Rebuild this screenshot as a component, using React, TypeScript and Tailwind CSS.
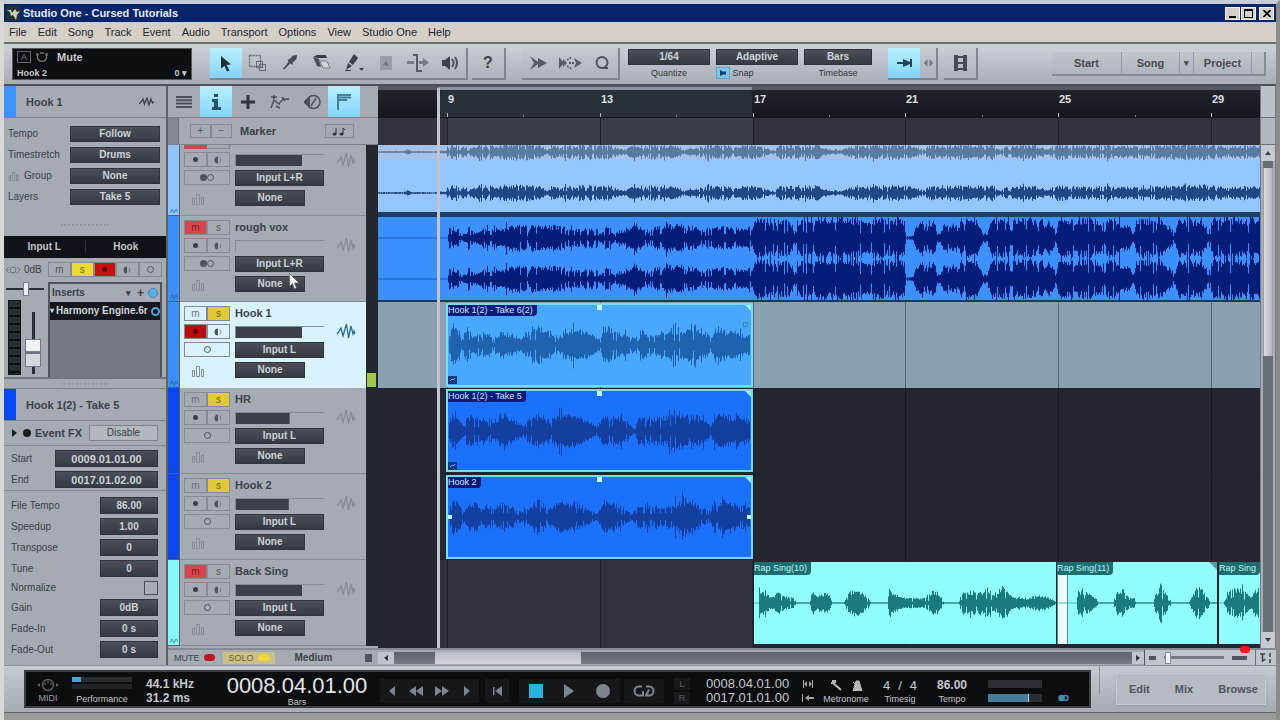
import { useState, type ReactNode } from 'react';
import { clsx } from 'clsx';

type Point = [number, number];

/* ---------- waveform helpers ---------- */

function noise(n: number) {
  const v = Math.sin(n * 127.1 + 311.7) * 43758.5453;
  return v - Math.floor(v);
}

function level(env: Point[], x: number) {
  if (x <= env[0][0]) return env[0][1];
  for (let i = 1; i < env.length; i++) {
    const [x1, a1] = env[i];
    const [x0, a0] = env[i - 1];
    if (x <= x1) return a0 + ((a1 - a0) * (x - x0)) / Math.max(1, x1 - x0);
  }
  return env[env.length - 1][1];
}

// one column per pixel, so the peaks stay hard-edged
function wavePath(from: number, to: number, mid: number, env: Point[], seed: number, rough = 0.5) {
  const top: string[] = [];
  const bottom: string[] = [];
  for (let x = from; x < to; x++) {
    const base = level(env, x + 0.5);
    const pick = noise(x * 3 + seed);
    const accent = base < 2 ? 1 : pick > 0.93 ? 1.4 : pick < 0.1 ? 0.4 : 1.05;
    const shared = 1 - rough * noise(x + seed);
    const up = Math.max(0.5, base * accent * shared * (0.9 + 0.2 * noise(x + seed + 400)));
    const down = Math.max(0.5, base * accent * shared * (0.9 + 0.2 * noise(x + seed + 999)));
    top.push(`${x},${(mid - up).toFixed(1)}`, `${x + 1},${(mid - up).toFixed(1)}`);
    bottom.unshift(`${x + 1},${(mid + down).toFixed(1)}`, `${x},${(mid + down).toFixed(1)}`);
  }
  return `M${top.join('L')}L${bottom.join('L')}Z`;
}

const guitarEnv: Point[] = [
  [0, 1], [26, 1], [30, 3], [34, 1], [60, 1], [68, 2], [70, 7], [84, 7], [90, 3], [97, 6], [150, 8], [162, 7], [170, 2], [175, 7],
  [230, 8], [243, 3], [248, 2], [253, 7], [275, 7], [286, 6], [292, 7], [312, 3], [328, 7], [374, 7], [385, 5], [396, 2], [402, 7],
  [440, 7], [450, 3], [462, 2], [478, 7], [530, 8], [545, 3], [553, 7], [578, 7], [590, 7], [615, 7], [622, 2], [630, 7], [660, 7],
  [668, 3], [678, 7], [705, 6], [714, 7], [770, 6], [782, 7], [825, 8], [850, 5], [858, 7], [882, 6],
];

const voxEnv: Point[] = [
  [70, 1], [72, 14], [82, 7], [88, 4], [91, 12], [96, 5], [108, 9], [118, 9], [130, 12], [148, 13], [150, 4], [153, 13], [180, 12],
  [183, 14], [190, 10], [220, 9], [223, 3], [228, 13], [236, 5], [250, 9], [258, 13], [270, 8], [290, 14], [310, 13], [325, 8],
  [345, 12], [368, 12], [374, 8], [377, 19], [395, 20], [414, 17], [416, 5], [420, 19], [450, 21], [480, 20], [490, 17], [496, 20],
  [526, 21], [528, 2], [535, 2], [538, 12], [545, 20], [556, 16], [562, 3], [567, 17], [580, 12], [583, 19], [600, 18], [606, 3],
  [611, 12], [616, 20], [645, 21], [672, 16], [676, 12], [684, 19], [715, 20], [735, 19], [752, 12], [756, 3], [758, 20], [780, 21],
  [797, 6], [801, 19], [826, 17], [830, 4], [835, 20], [882, 20],
];

const hookEnvs: Point[][] = [
  [[0, 3], [4, 20], [10, 15], [14, 4], [19, 19], [24, 9], [40, 13], [46, 8], [56, 14], [72, 7], [82, 14], [88, 19], [105, 11], [110, 8], [125, 16], [140, 13], [152, 6], [156, 19], [178, 12], [186, 8], [192, 16], [205, 9], [225, 17], [235, 12], [246, 20], [258, 14], [263, 5], [267, 17], [284, 14], [300, 11], [305, 6]],
  [[0, 3], [4, 17], [12, 12], [16, 5], [20, 15], [35, 14], [45, 11], [56, 18], [75, 5], [84, 15], [95, 16], [104, 10], [110, 17], [130, 15], [150, 5], [156, 17], [175, 15], [184, 4], [192, 15], [205, 12], [226, 17], [240, 18], [258, 12], [263, 4], [267, 17], [284, 16], [300, 12], [305, 5]],
  [[0, 3], [4, 19], [12, 13], [16, 5], [20, 15], [30, 13], [45, 10], [56, 14], [75, 5], [86, 15], [104, 8], [110, 15], [130, 13], [150, 4], [156, 18], [170, 12], [184, 4], [192, 13], [215, 9], [236, 19], [250, 12], [263, 5], [267, 18], [284, 15], [300, 11], [305, 6]],
];

const rapWaves: Point[][] = [
  [[5, 15], [9, 12], [18, 5], [24, 12], [28, 7], [41, 5], [42, 0], [56, 0], [58, 12], [64, 8], [76, 10], [78, 0], [90, 0], [94, 11], [104, 13], [115, 4], [117, 0], [134, 0], [135, 14], [140, 9], [150, 5], [170, 5], [180, 12], [188, 6], [190, 0], [205, 0], [207, 10], [236, 12], [242, 7], [248, 18], [258, 6], [275, 5], [285, 8], [296, 5], [302, 1]],
  [[20, 0], [21, 12], [32, 10], [40, 4], [41, 0], [57, 0], [58, 11], [66, 13], [78, 4], [79, 0], [97, 0], [98, 9], [104, 14], [113, 6], [114, 0], [132, 0], [134, 5], [142, 17], [152, 4], [153, 0], [160, 0]],
  [[5, 0], [6, 10], [14, 15], [24, 13], [33, 6], [35, 12], [40, 12]],
];

/* ---------- timeline geometry ---------- */

const barX = (bar: number) => Math.round(69 + (bar - 9) * 38.2);
const bars = [9, 13, 17, 21, 25, 29];

/* ---------- small controls ---------- */

function Picker({ label, value, className }: { label: string; value: string; className?: string }) {
  return (
    <select
      aria-label={label}
      defaultValue={value}
      className={clsx(
        'h-4 appearance-none border border-[#30343b] bg-linear-to-b from-[#4a4f58] to-[#363a42] text-[10px] leading-3 font-bold text-[#cdd2d9] outline-none [text-align-last:center]',
        className,
      )}
    >
      <option>{value}</option>
    </select>
  );
}

function Field({ id, label, value, className }: { id: string; label: string; value: string; className?: string }) {
  return (
    <div className="flex h-[17px] items-center justify-between">
      <label htmlFor={id} className="text-[10px] leading-3 text-[#3b3f48]">
        {label}
      </label>
      <input
        id={id}
        defaultValue={value}
        className={clsx(
          'h-[17px] border border-[#30343b] bg-linear-to-b from-[#4a4f58] to-[#363a42] text-center font-bold text-[#cdd2d9] outline-none',
          className,
        )}
      />
    </div>
  );
}

function Cell({ label, className, children }: { label: string; className?: string; children?: ReactNode }) {
  return (
    <button
      aria-label={label}
      className={clsx(
        'flex flex-1 items-center justify-center border border-[#868b93] text-[10px] leading-3',
        className ?? 'text-[#50545d]',
      )}
    >
      {children}
    </button>
  );
}

function Tool({ label, active, className, children }: { label: string; active?: boolean; className?: string; children: ReactNode }) {
  return (
    <button
      aria-label={label}
      className={clsx(
        'flex w-8 items-center justify-center self-stretch text-[#3c4048]',
        active && 'bg-linear-to-b from-[#b9f0ff] to-[#83d3f8]',
        className,
      )}
    >
      {children}
    </button>
  );
}

function ToolGroup({ className, children }: { className?: string; children: ReactNode }) {
  return (
    <div className={clsx('flex h-8 border-r-2 border-b-2 border-[#80858d] bg-linear-to-b from-[#c6cad1] to-[#aeb3bb]', className)}>
      {children}
    </div>
  );
}

const RecDot = () => <span className="size-[5px] rounded-full bg-current" />;

function Speaker() {
  return (
    <svg width="9" height="8" viewBox="0 0 9 8">
      <path d="M4 0.5v7A3.5 3.5 0 0 1 4 .5z" fill="currentColor" />
      <path d="M6 1.5q2 2.5 0 5" fill="none" stroke="currentColor" opacity=".6" />
    </svg>
  );
}

function WaveGlyph({ className }: { className?: string }) {
  return (
    <svg width="20" height="18" viewBox="0 0 20 18" className={className} fill="none" stroke="currentColor" strokeWidth="1.3">
      <path d="M1 12l1.500-2 2.500-4 2 8 3.500-12 2 14 2.500-12 2 8 1-3 1 3" />
    </svg>
  );
}

function Bars({ className }: { className?: string }) {
  return (
    <svg width="13" height="11" viewBox="0 0 13 11" className={className} fill="none" stroke="currentColor">
      <path d="M.5 4.500h2v6h-2zM4.500 .5h3v10h-3zM9.500 3.500h2v7h-2z" />
    </svg>
  );
}

/* ---------- window chrome ---------- */

function TitleBar() {
  return (
    <header className="flex h-[19px] items-center border-b border-[#c4cbe0] bg-[#08246b] px-0.5">
      <svg width="15" height="15" viewBox="0 0 15 15">
        <rect width="15" height="15" fill="#23303a" />
        <path d="M1 4h4l1 3 3-4 2 3 3-1-3 4-1 5-3-5-2 1-1-4z" fill="#c9d0b8" />
      </svg>
      <h1 className="ml-0.5 text-[11px] leading-4 font-bold text-[#e6ebf7]">Studio One - Cursed Tutorials</h1>
      <div className="ml-auto flex gap-px text-black">
        <button aria-label="Minimize" className="flex h-[13px] w-[15px] items-end justify-center border border-[#f2f0ea] bg-[#d4d0c8] pb-px">
          <span className="h-[2px] w-[7px] bg-current" />
        </button>
        <button aria-label="Maximize" className="flex h-[13px] w-[15px] items-center justify-center border border-[#f2f0ea] bg-[#d4d0c8]">
          <span className="h-[9px] w-[9px] border border-t-2 border-current" />
        </button>
        <button aria-label="Close" className="ml-0.5 flex h-[13px] w-[15px] items-center justify-center border border-[#f2f0ea] bg-[#d4d0c8]">
          <svg width="8" height="7" viewBox="0 0 8 7" stroke="currentColor" strokeWidth="1.700">
            <path d="M.5 0l7 7M7.500 0l-7 7" />
          </svg>
        </button>
      </div>
    </header>
  );
}

const menus = ['File', 'Edit', 'Song', 'Track', 'Event', 'Audio', 'Transport', 'Options', 'View', 'Studio One', 'Help'];

function MenuBar() {
  return (
    <nav className="flex h-[21px] items-center gap-[11px] border-b-2 border-[#6e706f] bg-[#d4d0c8] px-[5px] pb-px text-[11px] leading-4 text-[#26272b]">
      {menus.map((m) => (
        <button key={m}>{m}</button>
      ))}
    </nav>
  );
}

function LabeledPicker({ label, value, className, snap }: { label: string; value: string; className: string; snap?: boolean }) {
  return (
    <div className={clsx('flex flex-col', className)}>
      <Picker label={label} value={value} className="w-full" />
      <div className={clsx('relative mt-0.5 text-center text-[9px] leading-3 text-[#31353d]', snap && 'pr-7')}>
        {snap && (
          <button aria-label="Toggle snap" className="absolute left-0 flex h-3 w-3.5 items-center justify-center border border-[#5fa3cf] bg-[#7cc4ee]">
            <svg width="7" height="6" viewBox="0 0 7 6" fill="#173f63">
              <path d="M0 0l3 1.500h3v3H3L0 6z" />
            </svg>
          </button>
        )}
        {label}
      </div>
    </div>
  );
}

function Toolbar() {
  return (
    <div className="flex h-[42px] items-center border-b-2 border-[#4c5058] bg-linear-to-b from-[#ced2d9] to-[#a8adb6] pr-2.5 pl-2">
      <div className="flex h-8 w-[180px] flex-col justify-between border border-[#55585d] bg-[#0d0f12] px-1 text-[#c6c9cd]">
        <div className="flex items-center gap-1 pt-0.5">
          <span className="flex h-3 w-3.5 items-center justify-center border border-[#60636a] text-[9px] leading-3 text-[#7d8188]">A</span>
          <svg width="14" height="12" viewBox="0 0 14 12" fill="none" stroke="#6f737a" strokeWidth="1.500">
            <path d="M10.500 3A4.500 4.500 0 1 1 3.500 3M2 2v3M12 2v3M6 1v2M8 1v2" />
          </svg>
          <span className="ml-1 text-[11px] leading-3 font-bold">Mute</span>
        </div>
        <div className="flex justify-between text-[9px] leading-3 font-bold">
          <span>Hook 2</span>
          <span>0 ▾</span>
        </div>
      </div>

      <ToolGroup className="ml-[18px]">
        <Tool label="Arrow tool" active>
          <svg width="12" height="17" viewBox="0 0 12 17" fill="#23303a">
            <path d="M1 1l10 8.500-4.500.5 3 5.500-2.500 1-2.500-5.500L1 13.500z" />
          </svg>
        </Tool>
        <Tool label="Range tool">
          <svg width="20" height="18" viewBox="0 0 20 18" fill="none" stroke="#666b74">
            <rect x="1.500" y="1.500" width="11" height="11" strokeDasharray="2 1" strokeWidth="1.300" />
            <rect x="8.500" y="7.500" width="6" height="6" />
            <rect x="11.500" y="10.500" width="6" height="6" />
          </svg>
        </Tool>
        <Tool label="Split tool">
          <svg width="18" height="18" viewBox="0 0 18 18" fill="#484d56">
            <path d="M16 1l-4 .5-4 4-1.500-.5 1 3L2 15l1.500.5L9 9.500l3 1.500-.5-2 4-4z" />
          </svg>
        </Tool>
        <Tool label="Eraser tool">
          <svg width="20" height="18" viewBox="0 0 20 18">
            <path d="M1 3l4-2h9l1 3H6z" fill="#3a3e46" />
            <path d="M1 3l4 9 4 1-2-8z" fill="#4b5059" />
            <path d="M8 7h7l3 7h-7z" fill="#d3d6db" stroke="#777c85" />
          </svg>
        </Tool>
        <Tool label="Paint tool">
          <svg width="22" height="20" viewBox="0 0 22 20" fill="#3c4048">
            <path d="M11 1l4 4-5 7-4-3zM5 10l4 3-6 4z" />
            <path d="M2 17h6v1H2z" />
            <path d="M16 15h5l-2.500 3z" />
          </svg>
        </Tool>
        <Tool label="Mute tool">
          <svg width="14" height="16" viewBox="0 0 14 16">
            <rect x="1" y="1" width="12" height="14" fill="#989da6" />
            <path d="M4 10l3-4 3 5z" fill="#6f747d" />
          </svg>
        </Tool>
        <Tool label="Bend tool">
          <svg width="24" height="20" viewBox="0 0 24 20" fill="#777c85">
            <path d="M1 8h7v3H1zM23 9.500L17 5v3h-4v3h4v3z" />
            <path d="M7 2h4v16h5" fill="none" stroke="#555a63" strokeWidth="2" />
          </svg>
        </Tool>
        <Tool label="Listen tool">
          <svg width="18" height="16" viewBox="0 0 18 16" fill="#3c4048">
            <path d="M1 5h3l5-4v14l-5-4H1z" />
            <path d="M11 4q3 4 0 8M14 2q4 6 0 12" fill="none" stroke="#4a4f58" strokeWidth="2" />
          </svg>
        </Tool>
      </ToolGroup>

      <ToolGroup className="ml-1">
        <Tool label="Help">
          <span className="text-[16px] leading-4 font-bold">?</span>
        </Tool>
      </ToolGroup>

      <ToolGroup className="ml-4">
        <Tool label="Autoscroll">
          <svg width="19" height="16" viewBox="0 0 19 16" fill="#555a63">
            <path d="M1 1l8 6V3l9 5-9 5V9l-8 6 4-7z" />
          </svg>
        </Tool>
        <Tool label="Nudge">
          <svg width="25" height="16" viewBox="0 0 25 16" fill="#555a63">
            <path d="M1 2l4 5V4l4 4-4 4V9l-4 5zM16 3l8 5-8 5 2-5z" />
            <path d="M9 5l5-3M9 11l5 3" stroke="#555a63" strokeWidth="1.500" strokeDasharray="2 1" />
            <path d="M11 8h6" stroke="#555a63" strokeWidth="2" strokeDasharray="2 1" />
          </svg>
        </Tool>
        <Tool label="Quantize events">
          <svg width="16" height="16" viewBox="0 0 16 16" fill="none" stroke="#4f545d" strokeWidth="2">
            <circle cx="8" cy="7.500" r="5.500" />
            <path d="M9 13h5" />
          </svg>
        </Tool>
      </ToolGroup>

      <div className="ml-2 flex gap-1.5">
        <LabeledPicker label="Quantize" value="1/64" className="w-[82px]" />
        <LabeledPicker label="Snap" value="Adaptive" className="w-[82px]" snap />
        <LabeledPicker label="Timebase" value="Bars" className="w-[68px]" />
      </div>

      <ToolGroup className="ml-4">
        <Tool label="Snap to grid" active>
          <svg width="17" height="10" viewBox="0 0 17 10" fill="#20455c">
            <path d="M1 5h9" stroke="#20455c" strokeWidth="2" />
            <path d="M7 1l7 3V1h2v8h-2V6L7 9z" />
          </svg>
        </Tool>
        <button aria-label="Snap mode" className="flex w-4 items-center justify-center">
          <svg width="9" height="10" viewBox="0 0 9 10" fill="#70757e">
            <path d="M3.500 1v8L0 5zM5.500 1v8L9 5z" />
          </svg>
        </button>
      </ToolGroup>
      <ToolGroup className="ml-1.5">
        <Tool label="Video">
          <svg width="15" height="18" viewBox="0 0 15 18" fill="#454a53">
            <path d="M1 1h4v16H1zM10 1h4v16h-4zM4 2h7v2H4zM4 8h7v2H4zM4 14h7v2H4z" />
          </svg>
        </Tool>
      </ToolGroup>

      <div className="ml-auto flex h-6 border-r-2 border-b-2 border-[#868b93] bg-linear-to-b from-[#c0c5cc] to-[#b0b5bd] text-[11px] leading-4 font-bold text-[#474b54]">
        <button className="w-[70px] border-r border-[#989da5]">Start</button>
        <button className="w-[58px] border-r border-[#989da5]">Song</button>
        <button aria-label="Open songs" className="flex w-3.5 items-center justify-center border-r border-[#989da5] text-[9px]">▾</button>
        <button className="w-[58px] border-r border-[#989da5]">Project</button>
        <span className="w-3" />
      </div>
    </div>
  );
}

/* ---------- inspector ---------- */

function Grip() {
  return <div className="mx-auto w-12 border-t-2 border-dotted border-[#959aa2]" />;
}

function InspectorHead({ title, stripe, children }: { title: string; stripe: string; children?: ReactNode }) {
  return (
    <div className="flex h-8 items-center border-b border-[#7b8089]">
      <span className={clsx('w-3 self-stretch', stripe)} />
      <h2 className="ml-2.5 flex-1 text-[11px] leading-4 font-bold text-[#3d414a]">{title}</h2>
      {children}
    </div>
  );
}

const trackParams = [
  { label: 'Tempo', value: 'Follow' },
  { label: 'Timestretch', value: 'Drums' },
  { label: 'Group', value: 'None' },
  { label: 'Layers', value: 'Take 5' },
];

function Inspector() {
  const [normalize, setNormalize] = useState(false);

  return (
    <aside className="flex w-[164px] shrink-0 flex-col border-r-2 border-[#5d616a] bg-[#a5abb4]">
      <InspectorHead title="Hook 1" stripe="bg-[#3d93ff]">
        <svg width="15" height="9" viewBox="0 0 15 9" className="mr-3" fill="none" stroke="#3d414a" strokeWidth="1.300">
          <path d="M0 7l2-2 2-3 1.500 5L8 1l2 7 2-6 1.500 4L15 5" />
        </svg>
      </InspectorHead>

      <div className="flex flex-col gap-[5px] py-2 pr-1.5 pl-1">
        {trackParams.map((p) => (
          <div key={p.label} className="flex items-center justify-between">
            <span className="flex items-center gap-1 text-[10px] leading-3 text-[#3b3f48]">
              {p.label === 'Group' && <Bars className="h-[9px] w-3 text-[#7b8089]" />}
              {p.label}
            </span>
            <Picker label={p.label} value={p.value} className="w-[90px]" />
          </div>
        ))}
      </div>

      <div className="flex h-[23px] items-center">
        <Grip />
      </div>

      <div className="flex h-[22px] items-center bg-[#101317] text-center text-[10px] leading-3 font-bold text-[#c3c7cc]">
        <button className="flex-1">Input L</button>
        <button className="flex-1 border-l border-[#2c3036]">Hook</button>
      </div>

      <div className="flex h-[121px] border-b-2 border-[#71767f]">
        <div className="flex w-11 flex-col pt-1.5 pl-0.5">
          <div className="flex items-center gap-1 text-[10px] leading-3 text-[#3b3f48]">
            <svg width="14" height="8" viewBox="0 0 14 8" fill="none" stroke="#6b7079">
              <circle cx="7" cy="4" r="3" />
              <path d="M3 1L0 4l3 3M11 1l3 3-3 3" />
            </svg>
            0dB
          </div>
          <input
            type="range"
            aria-label="Pan"
            defaultValue={52}
            className="mt-1.5 h-3.5 w-[38px] appearance-none bg-[linear-gradient(#2b2e34,#2b2e34)] bg-[length:100%_2px] bg-center bg-no-repeat [&::-webkit-slider-thumb]:h-3.5 [&::-webkit-slider-thumb]:w-1.5 [&::-webkit-slider-thumb]:appearance-none [&::-webkit-slider-thumb]:border [&::-webkit-slider-thumb]:border-[#7b8089] [&::-webkit-slider-thumb]:bg-[#eceef1]"
          />
          <div className="mt-1 flex gap-1">
            <div className="ml-0.5 h-[75px] w-[13px] border border-[#14171b] bg-[repeating-linear-gradient(#23302f_0px,#23302f_6px,#0b0d0f_6px,#0b0d0f_8px)]" />
            <input
              type="range"
              aria-label="Volume"
              defaultValue={22}
              className="mt-3 h-[62px] w-4 appearance-none bg-[linear-gradient(#2b2e34,#2b2e34)] bg-[length:3px_100%] bg-center bg-no-repeat [direction:rtl] [writing-mode:vertical-lr] [&::-webkit-slider-thumb]:h-7 [&::-webkit-slider-thumb]:w-4 [&::-webkit-slider-thumb]:appearance-none [&::-webkit-slider-thumb]:border [&::-webkit-slider-thumb]:border-[#73777f] [&::-webkit-slider-thumb]:bg-[linear-gradient(#f1f2f4_40%,#6c7078_45%,#6c7078_52%,#d5d7db_55%)]"
            />
          </div>
        </div>
        <div className="flex flex-1 flex-col pt-1 pr-1">
          <div className="flex h-[15px]">
            <Cell label="Mute">m</Cell>
            <Cell label="Solo" className="bg-[#eadb35] text-[#7c6d10]">s</Cell>
            <Cell label="Record" className="bg-[#c8100f] text-[#5e0505]"><RecDot /></Cell>
            <Cell label="Monitor"><Speaker /></Cell>
            <Cell label="Channel mode"><span className="size-[7px] rounded-full border border-current" /></Cell>
          </div>
          <div className="mt-[5px] flex flex-1 flex-col border-2 border-b-0 border-[#50545c] bg-[#747982]">
            <div className="flex h-[18px] items-center bg-[#a5abb4] px-0.5 text-[10px] leading-3 font-bold text-[#3b3f48]">
              <span className="flex-1">Inserts</span>
              <button aria-label="Insert menu" className="mr-1.5 text-[9px]">▾</button>
              <button aria-label="Add insert" className="mr-1 text-[12px]">+</button>
              <button aria-label="Bypass inserts" className="size-2.5 rounded-full border border-[#3c86b8] bg-[#5aaee0]" />
            </div>
            <div className="flex h-[18px] items-center gap-0.5 bg-[#14181e] text-[10px] leading-3 font-bold text-[#d0d4d9]">
              <span className="text-[8px]">▾</span>
              <span className="flex-1 whitespace-nowrap">Harmony Engine.6r</span>
              <button aria-label="Bypass Harmony Engine" className="size-[9px] rounded-full border-2 border-[#4fa5dc]" />
            </div>
          </div>
        </div>
      </div>

      <div className="flex h-2.5 items-center border-b border-[#7b8089]">
        <Grip />
      </div>
      <InspectorHead title="Hook 1(2) - Take 5" stripe="bg-[#0a48f5]" />

      <div className="flex h-[25px] items-center gap-1 border-b border-[#858a93] px-2 text-[11px] leading-4 font-bold text-[#3b3f48]">
        <svg width="5" height="8" viewBox="0 0 5 8">
          <path d="M0 0l5 4-5 4z" fill="#1b1e23" />
        </svg>
        <span className="ml-0.5 size-2 rounded-full bg-[#1b1e23]" />
        <span>Event FX</span>
        <button className="ml-auto h-4 w-[69px] border border-[#80858e] bg-[#b3b8c0] text-[10px] leading-3 font-normal">Disable</button>
      </div>

      <div className="flex flex-col gap-1 border-b border-[#858a93] pt-1 pr-2 pb-0.5 pl-[7px]">
        <Field id="start" label="Start" value="0009.01.01.00" className="w-[103px] text-[11px]" />
        <Field id="end" label="End" value="0017.01.02.00" className="w-[103px] text-[11px]" />
      </div>

      <div className="flex flex-col gap-1 pt-1.5 pr-2 pl-[7px]">
        <Field id="tempo" label="File Tempo" value="86.00" className="w-[58px] text-[10px]" />
        <Field id="speedup" label="Speedup" value="1.00" className="w-[58px] text-[10px]" />
        <Field id="transpose" label="Transpose" value="0" className="w-[58px] text-[10px]" />
        <Field id="tune" label="Tune" value="0" className="w-[58px] text-[10px]" />
        <div className="flex h-3.5 items-center justify-between">
          <label htmlFor="normalize" className="text-[10px] leading-3 text-[#3b3f48]">Normalize</label>
          <input
            id="normalize"
            type="checkbox"
            checked={normalize}
            onChange={() => setNormalize(!normalize)}
            className="size-3.5 appearance-none border border-[#484c55] checked:bg-[#484c55]"
          />
        </div>
        <Field id="gain" label="Gain" value="0dB" className="w-[58px] text-[10px]" />
        <Field id="fadein" label="Fade-In" value="0 s" className="w-[58px] text-[10px]" />
        <Field id="fadeout" label="Fade-Out" value="0 s" className="w-[58px] text-[10px]" />
      </div>
    </aside>
  );
}

/* ---------- track list ---------- */

interface Track {
  name: string;
  input: string;
  volume: number;
  strip: string;
  muted?: boolean;
  solo?: boolean;
  armed?: boolean;
  selected?: boolean;
  stereo?: boolean;
  scrolled?: boolean; // top of the row is scrolled out of view
}

const tracks: Track[] = [
  { name: 'Track 1', input: 'Input L+R', volume: 75, strip: 'bg-[#8fc4ff]', muted: true, stereo: true, scrolled: true },
  { name: 'rough vox', input: 'Input L+R', volume: 0, strip: 'bg-[#3d8ff8]', muted: true, stereo: true },
  { name: 'Hook 1', input: 'Input L', volume: 75, strip: 'bg-[#3d8ff8]', solo: true, armed: true, selected: true },
  { name: 'HR', input: 'Input L', volume: 61, strip: 'bg-[#0b46f0]', solo: true },
  { name: 'Hook 2', input: 'Input L', volume: 60, strip: 'bg-[#0b46f0]', solo: true },
  { name: 'Back Sing', input: 'Input L', volume: 75, strip: 'bg-[#86f6f6]', muted: true },
];

function TrackRow({ track }: { track: Track }) {
  const { selected, scrolled } = track;
  return (
    <li className={clsx('flex shrink-0', scrolled ? 'h-[71px]' : 'h-[86px]')}>
      <span className={clsx('flex w-3 items-end justify-center border-r border-b border-[#59606b]', track.strip)}>
        <svg width="8" height="8" viewBox="0 0 8 8" fill="none" stroke="#1c4f8c" opacity=".6">
          <path d="M0 6l2-4 2 4 2-4 2 3" />
        </svg>
      </span>
      <div
        className={clsx(
          'relative flex flex-1 border-b pl-1',
          scrolled ? 'pt-0' : 'pt-1',
          selected ? 'border-[#d9f3fe] bg-[#d9f3fe]' : 'border-[#868b94] bg-[#a5abb4]',
        )}
      >
        <div className="flex w-[46px] flex-col gap-[3px]">
          {scrolled ? (
            <div className="flex h-1">
              <span className="w-1/2 bg-[#d5474c]" />
              <span className="w-1/2 border-r border-b border-[#868b93]" />
            </div>
          ) : (
            <div className="flex h-[15px]">
              <Cell label={`Mute ${track.name}`} className={track.muted ? 'bg-[#d5474c] text-[#852024]' : 'text-[#6c717a]'}>m</Cell>
              <Cell label={`Solo ${track.name}`} className={track.solo ? 'bg-[#e2c93a] text-[#7c6610]' : 'text-[#50545d]'}>s</Cell>
            </div>
          )}
          <div className="flex h-[15px]">
            <Cell label={`Arm ${track.name}`} className={track.armed ? 'bg-[#bb0c0e] text-[#5e0505]' : 'text-[#3b3f48]'}><RecDot /></Cell>
            <Cell label={`Monitor ${track.name}`}><Speaker /></Cell>
          </div>
          <div className="flex h-[15px]">
            <Cell label={`Channel mode of ${track.name}`}>
              {track.stereo && <span className="size-[7px] rounded-full bg-current" />}
              <span className="size-[7px] rounded-full border border-current" />
            </Cell>
          </div>
          <Bars className="mt-1.5 ml-2 text-[#868c95]" />
        </div>
        <div className="ml-[5px] flex w-[89px] flex-col">
          {scrolled ? (
            <span className="h-[5px]" />
          ) : (
            <span className="h-4 text-[11px] leading-[14px] font-bold whitespace-nowrap text-[#3d414a]">{track.name}</span>
          )}
          <input
            type="range"
            aria-label={`Volume of ${track.name}`}
            defaultValue={track.volume}
            className="mt-1 h-3 w-full appearance-none border-t border-l border-[#868b94] bg-[linear-gradient(#3b4048,#3b4048)] bg-no-repeat [&::-webkit-slider-thumb]:size-0 [&::-webkit-slider-thumb]:appearance-none"
            style={{ backgroundSize: `${track.volume}% 100%` }}
          />
          <Picker label={`Input of ${track.name}`} value={track.input} className="mt-1 w-full" />
          <Picker label={`Instrument of ${track.name}`} value="None" className="mt-1 w-[70px]" />
        </div>
        <WaveGlyph className={clsx('ml-3', scrolled ? 'mt-1.5' : 'mt-4', selected ? 'text-[#2f6c96]' : 'text-[#868c95]')} />
        {track.name === 'rough vox' && (
          <svg width="11" height="17" viewBox="0 0 11 17" className="absolute top-[57px] left-[109px]">
            <path d="M.5 .5v13l3-3 2 5.500 2-1-2-5h4.500z" fill="#fff" stroke="#555" strokeWidth=".7" />
          </svg>
        )}
      </div>
      <span className="flex w-3 items-end bg-[#23272e] pr-0.5 pl-px">
        {selected && <span className="mb-px h-3.5 flex-1 bg-[#9fc84d]" />}
      </span>
    </li>
  );
}

function TrackList() {
  return (
    <section className="flex w-[210px] shrink-0 flex-col bg-[#a5abb4]">
      <div className="flex h-8 border-b border-[#7b8089]">
        <Tool label="Track list">
          <svg width="16" height="12" viewBox="0 0 16 12" stroke="#4c5059" strokeWidth="2">
            <path d="M0 1h16M0 4.300h16M0 7.600h16M0 11h16" />
          </svg>
        </Tool>
        <Tool label="Inspector" active>
          <svg width="11" height="16" viewBox="0 0 11 16" fill="#23536d">
            <path d="M3 0h4v3H3zM1 5h6v8h3v3H1v-3h2V8H1z" />
          </svg>
        </Tool>
        <Tool label="Add tracks">
          <svg width="14" height="14" viewBox="0 0 14 14" stroke="#30343b" strokeWidth="3">
            <path d="M7 0v14M0 7h14" />
          </svg>
        </Tool>
        <Tool label="Automation">
          <svg width="20" height="15" viewBox="0 0 20 15" fill="none" stroke="#4c5059" strokeWidth="1.500">
            <path d="M1 14l3-8 5 4 4-5h6" />
            <path d="M1 3h6M4 1v4M6 12l4 2M12 3l3 4" />
          </svg>
        </Tool>
        <Tool label="Groups">
          <svg width="18" height="16" viewBox="0 0 18 16" fill="none" stroke="#4c5059" strokeWidth="1.500">
            <circle cx="10.500" cy="8" r="6.500" />
            <path d="M8 12l5-8" />
            <path d="M7 2v12L1 9V7z" fill="#4c5059" stroke="none" />
          </svg>
        </Tool>
        <Tool label="Markers" active>
          <svg width="16" height="18" viewBox="0 0 16 18">
            <path d="M2 1v16M2 2h13M2 4.500h13M2 7h9" stroke="#477f9b" strokeWidth="2" />
          </svg>
        </Tool>
      </div>
      <div className="flex h-[27px] items-center border-b border-[#7b8089]">
        <span className="w-[11px] self-stretch border-r border-[#6b7079] bg-[#81868f]" />
        <div className="ml-[11px] flex h-3.5 w-[42px]">
          <Cell label="Add marker">+</Cell>
          <Cell label="Remove marker">−</Cell>
        </div>
        <span className="ml-2 flex-1 text-[11px] leading-4 font-bold text-[#3d414a]">Marker</span>
        <button aria-label="Marker timebase" className="mr-6 flex h-3.5 w-[29px] items-center justify-center border border-[#868b93]">
          <svg width="15" height="9" viewBox="0 0 15 9" fill="#30343b">
            <ellipse cx="2.500" cy="7" rx="2" ry="1.500" />
            <ellipse cx="9.500" cy="7" rx="2" ry="1.500" />
            <path d="M4 7V1M11 7V1l2 2" fill="none" stroke="#30343b" />
          </svg>
        </button>
      </div>
      <ul className="flex flex-col pb-[2px]">
        {tracks.map((t) => (
          <TrackRow key={t.name} track={t} />
        ))}
      </ul>
    </section>
  );
}

/* ---------- arrangement ---------- */

function HookClip({ title, env, seed, light, badge }: { title: string; env: Point[]; seed: number; light?: boolean; badge?: boolean }) {
  return (
    <div
      className={clsx('absolute inset-y-px w-[307px] border-2 border-[#74dceb]', light ? 'bg-[#48a7ff]' : 'bg-[#1b70fc]')}
      style={{ left: barX(9) - 1 }}
    >
      <svg width="303" height="80" viewBox="0 0 303 80" className="absolute inset-0">
        <path d={wavePath(1, 302, 40, env, seed, 0.4)} fill={light ? '#1f63ae' : '#153f9f'} />
        <path d="M297 0h6v6z" fill="#a5f4f4" />
        <rect x="149" y="0" width="5" height="5" fill="#c8ffff" />
        {light && <rect x="295.500" y="17.500" width="4" height="4" fill="#48a7ff" stroke="#2a8fb0" />}
        {!badge && <path d="M0 38h4v4H0zM299 38h4v4h-4z" fill="#c8ffff" />}
        {badge && (
          <g>
            <rect x="0" y="71" width="9" height="8" fill="#15387f" />
            <path d="M2 76l2-2 1 1 2-2" fill="none" stroke="#6aa7f0" />
          </g>
        )}
      </svg>
      <span className="absolute top-0 left-0 rounded-br bg-[#0a1a7c] pr-1 text-[9px] leading-[11px] whitespace-nowrap text-[#d5e2ff]">{title}</span>
    </div>
  );
}

function RapClip({ title, left, className, env, seed, tail }: { title: string; left: number; className: string; env: Point[]; seed: number; tail?: boolean }) {
  const width = env[env.length - 1][0];
  return (
    <div className={clsx('absolute top-0.5 bottom-1 overflow-hidden bg-[#92fdfd]', className)} style={{ left }}>
      {tail && <span className="absolute inset-y-0 left-0 w-[11px] border-x border-[#55898c] bg-[#eafcfd]" />}
      <svg width={width} height="82" viewBox={`0 0 ${width} 82`} className="absolute inset-0">
        <path d={`M0 41h${width}`} stroke="#4fb5b5" />
        <path d={wavePath(env[0][0], width, 41, env, seed, 0.35)} fill="#1b7a7c" />
        {tail && <path d={`M${width - 8} 0h8v8z`} fill="#5f9a9d" />}
      </svg>
      <span className="absolute top-0 left-0 rounded-br bg-[#1c6d72] pr-1 text-[9px] leading-[13px] whitespace-nowrap text-[#bff5f2]">{title}</span>
    </div>
  );
}

function GridLines({ className }: { className: string }) {
  return (
    <>
      {bars.map((b) => (
        <span key={b} className={clsx('absolute inset-y-0 w-px', className)} style={{ left: barX(b) }} />
      ))}
    </>
  );
}

function Ruler() {
  return (
    <div className="relative h-8 overflow-hidden border-t-4 border-b border-[#15161b] border-t-[#555a63] bg-linear-to-b from-[#23242a] to-[#16171c]">
      <div className="absolute top-0 bottom-0 w-[312px] rounded-t-sm bg-[#28303a]" style={{ left: barX(9) - 7 }} />
      {bars.map((b) => (
        <span key={b} className="absolute bottom-0 h-1 w-px bg-[#b5b9c0]" style={{ left: barX(b) }} />
      ))}
      {bars.map((b) => (
        <span key={b} className="absolute bottom-0 h-0.5 w-px bg-[#7e828a]" style={{ left: barX(b + 2) }} />
      ))}
      {bars.map((b) => (
        <span key={b} className="absolute top-px text-[11px] leading-4 font-bold text-[#dfe1e5]" style={{ left: barX(b) + 1 }}>
          {b}
        </span>
      ))}
    </div>
  );
}

function Arrangement() {
  return (
    <section className="relative flex min-w-0 flex-1 flex-col overflow-hidden bg-[#24272f]">
      <Ruler />
      <div className="absolute top-px h-[3px] w-[314px] bg-[#8a93a1]" style={{ left: barX(9) - 9 }} />
      <div className="relative h-[27px] bg-[#31343c]">
        <div className="absolute inset-y-0 w-[306px] bg-[#383f48]" style={{ left: barX(9) }} />
        <GridLines className="bg-[#1d2026]" />
      </div>

      <div className="relative h-[72px] border-b-[5px] border-[#1d3f62] bg-[#95c5ff]">
        <svg width="100%" height="67" viewBox="0 0 882 67" preserveAspectRatio="none">
          <rect width="882" height="15" fill="#a5c3ea" />
          <path d={wavePath(0, 882, 7, guitarEnv, 11)} fill="#587ba6" />
          <path d={wavePath(0, 882, 48, guitarEnv, 11)} fill="#1c4a83" />
        </svg>
      </div>
      <div className="relative h-[85px] border-b-2 border-[#1d3a5c] bg-[#3d90ff]">
        <svg width="100%" height="83" viewBox="0 0 882 83" preserveAspectRatio="none">
          <path d="M0 21h70M0 62h70" stroke="#1a58c0" />
          <path d={wavePath(70, 882, 21, voxEnv, 5, 0.4)} fill="#031d78" />
          <path d={wavePath(70, 882, 62, voxEnv, 5, 0.4)} fill="#031d78" />
        </svg>
      </div>
      <div className="relative h-[86px] bg-[#89a1b1]">
        <GridLines className="bg-[#546773]" />
        <HookClip title="Hook 1(2) - Take 6(2)" env={hookEnvs[0]} seed={21} light badge />
      </div>
      <div className="relative h-[86px] border-b border-[#20232a]">
        <GridLines className="bg-[#15181e]" />
        <HookClip title="Hook 1(2) - Take 5" env={hookEnvs[1]} seed={33} badge />
      </div>
      <div className="relative h-[86px]">
        <GridLines className="bg-[#15181e]" />
        <HookClip title="Hook 2" env={hookEnvs[2]} seed={47} />
      </div>
      <div className="relative h-[88px]">
        <div className="absolute inset-y-0 w-[312px] bg-[#2f323c]" style={{ left: barX(9) - 7 }} />
        <GridLines className="bg-[#1c1e25]" />
        <RapClip title="Rap Sing(10)" left={376} className="w-[302px]" env={rapWaves[0]} seed={3} />
        <RapClip title="Rap Sing(11)" left={679} className="w-[160px]" env={rapWaves[1]} seed={8} tail />
        <RapClip title="Rap Sing" left={841} className="right-0" env={rapWaves[2]} seed={14} />
      </div>

      {/* playhead */}
      <div className="absolute top-0.5 bottom-0 left-[59px] w-[3px] bg-[#c3c5cc]" />
    </section>
  );
}

function VerticalScroll() {
  return (
    <div className="flex w-4 shrink-0 flex-col items-center border-x border-[#747982] bg-[#a9adb5]">
      <span className="h-8 w-full border-b border-[#6b7079] bg-[#bcc0c7]" />
      <span className="h-[27px] w-full border-b border-[#6b7079] bg-[#b3b7bf]" />
      <button aria-label="Scroll up" className="flex h-4 w-full items-center justify-center bg-[#c6cad0] text-[#3b3f48]">
        <svg width="6" height="4" viewBox="0 0 6 4" fill="currentColor"><path d="M3 0l3 4H0z" /></svg>
      </button>
      <div className="flex w-2.5 flex-1 flex-col bg-[#686d76] pt-[7px]">
        <div className="h-[188px] border-x border-[#9a9ea6] bg-linear-to-r from-[#dcdee2] to-[#b4b7bd]" />
      </div>
      <button aria-label="Scroll down" className="flex h-4 w-full items-center justify-center bg-[#c6cad0] text-[#3b3f48]">
        <svg width="6" height="4" viewBox="0 0 6 4" fill="currentColor"><path d="M3 4l3-4H0z" /></svg>
      </button>
    </div>
  );
}

function BottomStrip() {
  return (
    <div className="relative flex h-[17px] items-center border-t-2 border-[#868b93] bg-[#a5abb4]">
      <div className="flex w-[210px] items-center text-[9px] leading-3 text-[#3b3f48]">
        <button className="flex items-center gap-1 px-1.5">
          MUTE
          <span className="h-[7px] w-[11px] rounded-sm bg-[#c01820]" />
        </button>
        <button className="ml-0.5 flex items-center gap-1 bg-[#c9c08a] px-1.5 text-[#6f6420]">
          SOLO
          <span className="h-[7px] w-[11px] rounded-sm bg-[#f2d534]" />
        </button>
        <button className="ml-5 text-[10px] font-bold">Medium</button>
        <button aria-label="Lock height" className="mr-1.5 ml-auto h-2 w-[7px] bg-[#50545d]" />
      </div>
      <button aria-label="Scroll left" className="flex h-3 w-4 items-center justify-center bg-[#c0c4cb]">
        <svg width="4" height="6" viewBox="0 0 4 6" fill="#2f333a"><path d="M4 0v6L0 3z" /></svg>
      </button>
      <div className="flex h-3 flex-1 bg-linear-to-b from-[#5d626b] to-[#777c85] pl-[41px]">
        <div className="w-[146px] bg-linear-to-b from-[#b9bcc3] to-[#d3d5da]" />
      </div>
      <button aria-label="Scroll right" className="flex h-3 w-3 items-center justify-center bg-[#c0c4cb]">
        <svg width="4" height="6" viewBox="0 0 4 6" fill="#2f333a"><path d="M0 0v6l4-3z" /></svg>
      </button>
      <div className="flex h-full w-[132px] items-center gap-2 border-l border-[#50545d] bg-[#c0c4cb] px-1">
        <span className="h-1 w-2 bg-[#50545d]" />
        <input
          type="range"
          aria-label="Horizontal zoom"
          defaultValue={2}
          className="h-3 w-[60px] flex-1 appearance-none bg-[linear-gradient(#747982,#747982)] bg-[length:100%_3px] bg-center bg-no-repeat [&::-webkit-slider-thumb]:h-3 [&::-webkit-slider-thumb]:w-1.5 [&::-webkit-slider-thumb]:appearance-none [&::-webkit-slider-thumb]:border [&::-webkit-slider-thumb]:border-[#868b93] [&::-webkit-slider-thumb]:bg-[#f0f1f3]"
        />
        <span className="h-1 w-[17px] bg-[#50545d]" />
        <button aria-label="Data zoom" className="flex h-full items-center border-l border-[#6b7079] pl-1">
          <svg width="12" height="10" viewBox="0 0 12 10" fill="none" stroke="#3b3f48" strokeWidth="1.500">
            <path d="M0 1h5M2.500 1v7l3-2M10 0v4M10 6v4" />
          </svg>
        </button>
      </div>
      <span className="absolute -top-1 right-[26px] h-[7px] w-2.5 rounded-full bg-[#f0151c]" />
    </div>
  );
}

/* ---------- transport ---------- */

function TransportButton({ label, className, children }: { label: string; className: string; children: ReactNode }) {
  return (
    <button aria-label={label} className={clsx('flex h-6 items-center justify-center bg-[#15181b] text-[#7d868e]', className)}>
      {children}
    </button>
  );
}

function Transport() {
  return (
    <footer className="flex h-[47px] items-center border-t border-[#8b9098] bg-linear-to-b from-[#c5cad1] to-[#a6abb4] pl-5">
      <div className="flex h-[38px] flex-1 items-center border-2 border-[#3a3d42] bg-[#0b0d0f] pt-1 pl-1 text-[9px] leading-3 text-[#c5c8cc]">
        <div className="flex w-9 flex-col items-center">
          <svg width="22" height="14" viewBox="0 0 22 14" fill="none" stroke="#565b61" strokeWidth="1.500">
            <circle cx="11" cy="7" r="5.500" />
            <path d="M8 5v2M14 5v2M11 3v2" />
            <path d="M3 5L0 7l3 2zM19 5l3 2-3 2z" fill="#565b61" stroke="none" />
          </svg>
          <span className="text-[#9a9ea4]">MIDI</span>
        </div>
        <div className="ml-1.5 flex w-[60px] flex-col items-center">
          <div className="h-[5px] w-full bg-[#2a2d31]"><div className="h-full w-[9px] bg-[#4f9fd0]" /></div>
          <div className="mt-0.5 mb-1 h-[5px] w-full bg-[#222528]" />
          <span>Performance</span>
        </div>
        <div className="ml-3.5 w-[60px] text-[12px] leading-[14px] font-bold">
          <div>44.1 kHz</div>
          <div>31.2 ms</div>
        </div>
        <div className="ml-5 flex w-[142px] flex-col items-center whitespace-nowrap">
          <span className="text-[22px] leading-[22px] text-[#e2e4e7]">0008.04.01.00</span>
          <span className="leading-[11px]">Bars</span>
        </div>

        <div className="ml-3 flex">
          <TransportButton label="Previous event" className="w-6">
            <svg width="8" height="10" viewBox="0 0 8 10" fill="currentColor"><path d="M7 0v10L1 5z" /></svg>
          </TransportButton>
          <TransportButton label="Rewind" className="w-[25px]">
            <svg width="15" height="10" viewBox="0 0 15 10" fill="currentColor"><path d="M7 0v10L0 5zM14 0v10L7 5z" /></svg>
          </TransportButton>
          <TransportButton label="Fast forward" className="w-[25px]">
            <svg width="15" height="10" viewBox="0 0 15 10" fill="currentColor"><path d="M1 0v10l7-5zM8 0v10l7-5z" /></svg>
          </TransportButton>
          <TransportButton label="Next event" className="w-[25px]">
            <svg width="8" height="10" viewBox="0 0 8 10" fill="currentColor"><path d="M1 0v10l6-5z" /></svg>
          </TransportButton>
          <TransportButton label="Return to zero" className="ml-1.5 w-6">
            <svg width="9" height="10" viewBox="0 0 9 10" fill="currentColor"><path d="M0 1h1.500v8H0zM9 0v10L2 5z" /></svg>
          </TransportButton>
          <TransportButton label="Stop" className="ml-2.5 w-[33px]">
            <span className="size-3.5 bg-[#2cb3dc]" />
          </TransportButton>
          <TransportButton label="Play" className="w-[34px]">
            <svg width="12" height="14" viewBox="0 0 12 14" fill="currentColor"><path d="M1 0l10 7-10 7z" /></svg>
          </TransportButton>
          <TransportButton label="Record" className="w-[34px]">
            <span className="size-3.5 rounded-full bg-current" />
          </TransportButton>
          <TransportButton label="Loop" className="ml-1 w-10">
            <svg width="24" height="14" viewBox="0 0 24 14" fill="none" stroke="currentColor" strokeWidth="2">
              <path d="M11 7v4.500H7a4.500 4.500 0 0 1 0-9h3M14 2.500h3a4.500 4.500 0 0 1 0 9h-3l3-6" />
            </svg>
          </TransportButton>
        </div>

        <div className="ml-2.5 flex w-4 flex-col gap-0.5 text-center text-[#565b61]">
          <span className="bg-[#17191d]">L</span>
          <span className="bg-[#17191d]">R</span>
        </div>
        <div className="ml-4 w-[86px] text-[13px] leading-[14px] whitespace-nowrap">
          <div>0008.04.01.00</div>
          <div>0017.01.01.00</div>
        </div>
        <div className="ml-2.5 flex flex-col items-center gap-1.5">
          <svg width="10" height="8" viewBox="0 0 10 8" fill="#a0a5ab"><path d="M0 0h1v8H0zM9 0h1v8H9zM1 4l3-3v6zM9 4L6 1v6z" /></svg>
          <svg width="12" height="8" viewBox="0 0 12 8" fill="#a0a5ab"><path d="M0 0h1v8H0zM3 4l4-3v2h5v2H7v2z" /></svg>
        </div>
        <div className="ml-2 flex w-12 flex-col items-center">
          <div className="flex h-[15px] items-center gap-2.5">
            <svg width="12" height="12" viewBox="0 0 12 12" stroke="#b4b8bd" strokeWidth="2" fill="none"><path d="M3 1v3H1M3 4l8 7M5 1v3" /></svg>
            <svg width="11" height="11" viewBox="0 0 11 11" fill="#b4b8bd"><path d="M4 1h3l3 10H1zM1 2l4 4" stroke="#b4b8bd" /></svg>
          </div>
          <span>Metronome</span>
        </div>
        <div className="ml-1.5 flex w-12 flex-col items-center">
          <div className="flex gap-2 text-[13px] leading-[15px]">
            <span>4</span>
            <span>/</span>
            <span>4</span>
          </div>
          <span>Timesig</span>
        </div>
        <div className="ml-2 flex w-10 flex-col items-center">
          <span className="text-[12px] leading-[15px] font-bold">86.00</span>
          <span>Tempo</span>
        </div>
        <div className="ml-4 flex w-[54px] flex-col gap-1.5">
          <div className="h-2 bg-[#2b2e33]" />
          <div className="h-2 bg-[#2b2e33]"><div className="h-full w-[41px] border-r border-[#a8dcef] bg-[#3f7d9a]" /></div>
        </div>
        <svg width="11" height="8" viewBox="0 0 11 8" className="mt-3.5 ml-4" fill="none" stroke="#3f8fb5" strokeWidth="1.500">
          <circle cx="3.500" cy="4" r="2.500" fill="#3f8fb5" />
          <circle cx="7.500" cy="4" r="2.500" />
        </svg>
      </div>
      <span className="ml-2 h-7 w-px self-start bg-[#8b9098]" />
      <div className="mr-2.5 ml-4 flex h-8 w-[150px] items-center justify-between border border-[#c6cad0] bg-[#b6bbc3] pr-[7px] pl-3 text-[11px] leading-4 font-bold text-[#50545d] shadow-sm">
        <button>Edit</button>
        <button>Mix</button>
        <button>Browse</button>
      </div>
    </footer>
  );
}

export default function App() {
  return (
    <div className="flex min-h-screen flex-col border-x-4 border-t-4 border-t-[#c9ced6] border-r-[#8d8b88] border-l-[#d9d8d3] bg-[#92908f] font-['Liberation_Sans',Arial,sans-serif]">
      <TitleBar />
      <MenuBar />
      <Toolbar />
      <main className="flex">
        <Inspector />
        <div className="flex min-w-0 flex-1 flex-col">
          <div className="flex">
            <TrackList />
            <Arrangement />
            <VerticalScroll />
          </div>
          <BottomStrip />
        </div>
      </main>
      <Transport />
      <div className="h-2 border-t border-[#5f636b] bg-[#9c9a98]" />
    </div>
  );
}
